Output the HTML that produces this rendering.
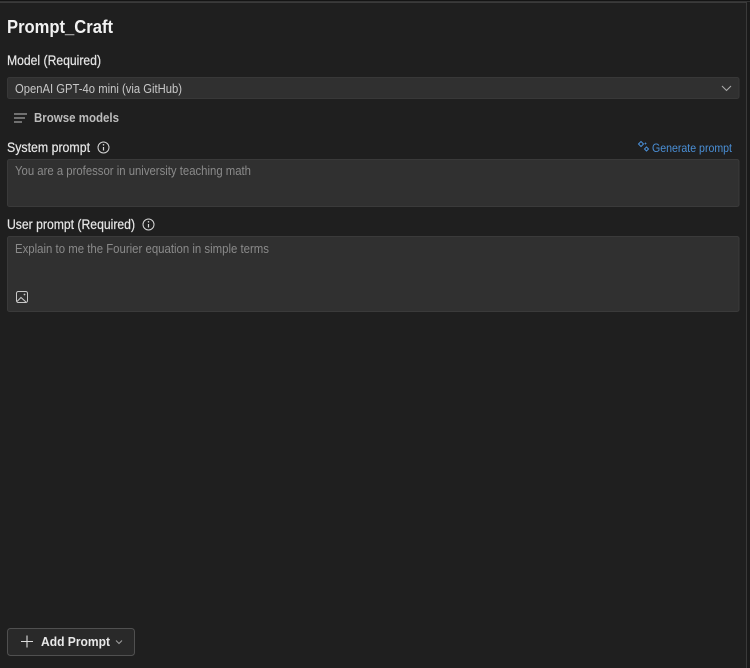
<!DOCTYPE html>
<html><head><meta charset="utf-8"><title>Prompt_Craft</title>
<style>
html,body{margin:0;padding:0;background:#1f1f1f;width:750px;height:668px;overflow:hidden}
svg{display:block}
text{font-family:"Liberation Sans",sans-serif}
</style></head><body>
<svg width="750" height="668" viewBox="0 0 750 668" xmlns="http://www.w3.org/2000/svg">
<rect width="750" height="668" fill="#1f1f1f"/>
<rect x="0" y="0" width="750" height="1.5" fill="#141414"/>
<rect x="0" y="1.5" width="750" height="1" fill="#555555"/>
<rect x="746" y="2" width="1" height="666" fill="#3a3a3a"/>
<rect x="747" y="2" width="3" height="666" fill="#1a1a1a"/>

<text x="7" y="33" font-size="18" font-weight="700" fill="#f2f2f2" textLength="106" lengthAdjust="spacingAndGlyphs">Prompt_Craft</text>
<text x="7" y="65" font-size="13.500" fill="#e6e6e6" stroke="#e6e6e6" stroke-width=".2" textLength="94" lengthAdjust="spacingAndGlyphs">Model (Required)</text>

<rect x="7.500" y="77.500" width="731.500" height="21" rx="2" fill="#303030" stroke="#383838"/>
<text x="15" y="93" font-size="12.500" fill="#c8c8c8" textLength="167" lengthAdjust="spacingAndGlyphs">OpenAI GPT-4o mini (via GitHub)</text>
<path d="M722 86l4.500 4.500 4.500-4.500" fill="none" stroke="#a8a8a8" stroke-width="1.100"/>

<path d="M14 114h13M14 118h11M14 122h8" fill="none" stroke="#c0c0c0" stroke-width="1"/>
<text x="34" y="122" font-size="13" font-weight="700" fill="#bdbdbd" textLength="85" lengthAdjust="spacingAndGlyphs">Browse models</text>

<text x="7" y="152" font-size="13.500" fill="#e6e6e6" stroke="#e6e6e6" stroke-width=".2" textLength="83" lengthAdjust="spacingAndGlyphs">System prompt</text>
<circle cx="103.500" cy="147.500" r="5.500" fill="none" stroke="#d6d6d6" stroke-width="1"/>
<path d="M103.500 147v3.500" stroke="#d6d6d6" stroke-width="1.200"/><circle cx="103.500" cy="144.800" r=".8" fill="#d6d6d6"/>

<path d="M641 141.500l2.500 2.500-2.500 2.500-2.500-2.500zM646.500 147l2 2-2 2-2-2z" fill="none" stroke="#4a90d9" stroke-width="1"/>
<path d="M645.500 142.500v2M644.500 143.500h2" stroke="#4a90d9" stroke-width=".8"/>
<text x="652" y="152" font-size="12" fill="#4a8fd6" textLength="80" lengthAdjust="spacingAndGlyphs">Generate prompt</text>

<rect x="7.500" y="159.500" width="731.500" height="47" rx="2" fill="#303030" stroke="#3a3a3a"/>
<text x="15" y="175" font-size="12.500" fill="#8a8a8a" textLength="236" lengthAdjust="spacingAndGlyphs">You are a professor in university teaching math</text>

<text x="7" y="229" font-size="13.500" fill="#e6e6e6" stroke="#e6e6e6" stroke-width=".2" textLength="128" lengthAdjust="spacingAndGlyphs">User prompt (Required)</text>
<circle cx="148.500" cy="224.500" r="5.500" fill="none" stroke="#d6d6d6" stroke-width="1"/>
<path d="M148.500 224v3.500" stroke="#d6d6d6" stroke-width="1.200"/><circle cx="148.500" cy="221.800" r=".8" fill="#d6d6d6"/>

<rect x="7.500" y="236.500" width="731.500" height="75" rx="2" fill="#303030" stroke="#3a3a3a"/>
<text x="15" y="253" font-size="12.500" fill="#8a8a8a" textLength="254" lengthAdjust="spacingAndGlyphs">Explain to me the Fourier equation in simple terms</text>
<rect x="16.500" y="291.500" width="11" height="11" rx="1.800" fill="none" stroke="#c8c8c8" stroke-width="1"/>
<path d="M17 301.500l4-4 5.500 5" fill="none" stroke="#c8c8c8" stroke-width="1"/>
<circle cx="24.500" cy="294.500" r=".9" fill="#c8c8c8"/>

<rect x="7.500" y="628.500" width="127" height="27" rx="3" fill="#292929" stroke="#505050"/>
<path d="M27 635.500v12M21 641.500h12" stroke="#dcdcdc" stroke-width="1.100" fill="none"/>
<text x="41" y="646" font-size="13" font-weight="700" fill="#e8e8e8" textLength="69" lengthAdjust="spacingAndGlyphs">Add Prompt</text>
<path d="M116 640.500l3 3 3-3" fill="none" stroke="#a0a0a0" stroke-width="1"/>
</svg>
</body></html>
